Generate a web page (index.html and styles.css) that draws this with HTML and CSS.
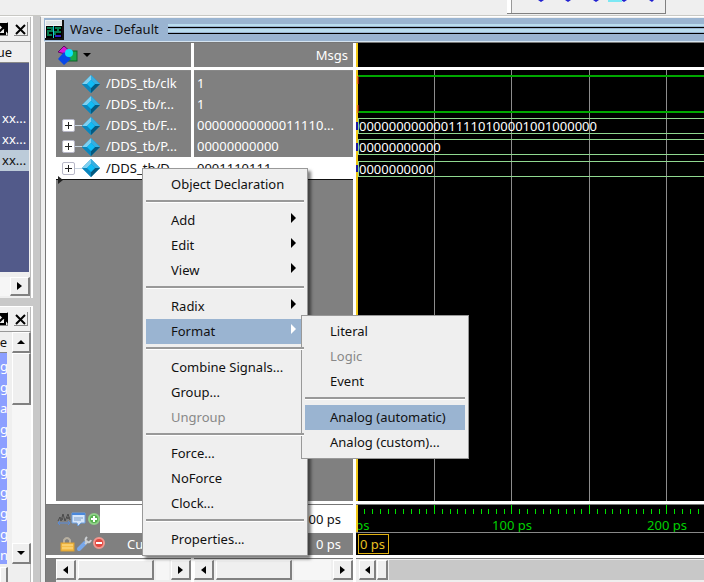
FILE: index.html
```html
<!DOCTYPE html>
<html lang="en">
<head>
    <meta charset="UTF-8">
    <meta name="viewport" content="width=device-width, initial-scale=1.0">
    <title>Wave - Default</title>
    <link rel="stylesheet" href="styles.css">
</head>
<body>
    <!-- shared icons -->
    <svg class="defs" aria-hidden="true">
        <symbol id="diamond" viewBox="0 0 18 18">
            <path d="M9 0L18 9L9 18L0 9Z" fill="#0a8cc8"/>
            <path d="M9 0L9 5L5 9L0 9Z" fill="#7fd0f0"/>
            <path d="M9 0L18 9L13 9L9 5Z" fill="#35aee0"/>
            <path d="M0 9L5 9L9 13L9 18Z" fill="#0b86bd"/>
            <path d="M18 9L9 18L9 13L13 9Z" fill="#045a80"/>
            <path d="M9 5L13 9L9 13L5 9Z" fill="#0fbcf5"/>
        </symbol>
        <symbol id="undock" viewBox="0 0 14 14">
            <path d="M1 4H6M1 3V12H11V8" fill="none" stroke="#000" stroke-width="2"/>
            <path d="M5 10L11 4M6 2H13V9Z" fill="#000" stroke="#000" stroke-width="2"/>
        </symbol>
        <symbol id="close" viewBox="0 0 14 14">
            <path d="M2 3L11 12M11 3L2 12" stroke="#000" stroke-width="2"/>
        </symbol>
    </svg>

    <div class="toolbar">
        <div class="toolbar-group">
            <svg width="158" height="13">
                <path d="M31 0h6l-3 2zM58 0h6l-3 2zM86 0h6l-3 2zM114 0h6l-3 2zM142 0h5l-2 2z" fill="#2020d0"/>
                <rect x="101" y="0" width="14" height="2" fill="#7ce8f4"/>
            </svg>
        </div>
    </div>

    <div class="workspace">
        <div class="side">
            <section class="panel objects">
                <div class="panel-bar">
                    <button class="bar-btn" aria-label="Undock"><svg><use href="#undock"/></svg></button>
                    <button class="bar-btn" aria-label="Close"><svg><use href="#close"/></svg></button>
                </div>
                <div class="col-head"><span>ue</span></div>
                <ul class="values">
                    <li></li>
                    <li></li>
                    <li>xx...</li>
                    <li>xx...</li>
                    <li class="selected">xx...</li>
                </ul>
                <div class="scroll-x">
                    <div class="track"></div>
                    <button class="scroll-btn right" aria-label="Scroll right"></button>
                </div>
            </section>

            <section class="panel processes">
                <div class="panel-bar">
                    <button class="bar-btn" aria-label="Undock"><svg><use href="#undock"/></svg></button>
                    <button class="bar-btn" aria-label="Close"><svg><use href="#close"/></svg></button>
                </div>
                <div class="panel-split">
                    <div class="types">
                        <div class="col-head"><span>pe</span></div>
                        <ul>
                            <li>g</li>
                            <li>g</li>
                            <li>a</li>
                            <li>g</li>
                            <li>g</li>
                            <li>g</li>
                            <li>g</li>
                            <li>g</li>
                            <li>g</li>
                            <li>n</li>
                        </ul>
                    </div>
                    <div class="scroll-y">
                        <button class="scroll-btn up" aria-label="Scroll up"></button>
                        <div class="thumb"></div>
                        <div class="track"></div>
                        <button class="scroll-btn down" aria-label="Scroll down"></button>
                    </div>
                </div>
                <div class="corner"><button class="scroll-btn" aria-label="Scroll right"></button></div>
            </section>
        </div>

        <main class="wave">
            <div class="title-bar">
                <svg width="19" height="20" shape-rendering="crispEdges">
                    <rect width="19" height="20" fill="#111"/>
                    <rect width="17" height="18" fill="#f4f4f4"/>
                    <rect x="1" y="1" width="16" height="4" fill="#dfe3e6"/>
                    <rect x="1" y="6" width="16" height="12" fill="#000"/>
                    <path d="M2 8H7V11H3V15H7M10 15V12H13V8H16M10 8H12M13 12H16" fill="none" stroke="#067a4c" stroke-width="2"/>
                    <rect x="8" y="6" width="1" height="12" fill="#18c8d8"/>
                    <path d="M10 16H16" stroke="#3020c0" stroke-width="2"/>
                </svg>
                <h1>Wave - Default</h1>
                <div class="grip"></div>
            </div>

            <div class="wave-grid">
                <div class="head">
                    <svg width="22" height="20">
                        <rect x="11" y="6" width="9" height="10" fill="#18a848" stroke="#106028"/>
                        <path d="M1 7L7 1L14 7L8 9Z" fill="#d818d8" stroke="#601060"/>
                        <path d="M7 7L14 14L7 20L1 14Z" fill="#0848e8"/>
                        <circle cx="12" cy="8" r="4" fill="#10e0f8"/>
                    </svg>
                    <span class="drop"></span>
                </div>
                <div class="head msgs">Msgs</div>
                <div class="head black"></div>

                <div class="gutter">
                    <ul class="signals">
                        <li><svg class="gem"><use href="#diamond"/></svg>/DDS_tb/clk</li>
                        <li><svg class="gem"><use href="#diamond"/></svg>/DDS_tb/r...</li>
                        <li><button class="expand" aria-label="Expand"></button><svg class="gem"><use href="#diamond"/></svg>/DDS_tb/F...</li>
                        <li><button class="expand" aria-label="Expand"></button><svg class="gem"><use href="#diamond"/></svg>/DDS_tb/P...</li>
                        <li class="selected"><button class="expand" aria-label="Expand"></button><svg class="gem"><use href="#diamond"/></svg>/DDS_tb/D...</li>
                    </ul>
                    <span class="insert-mark"></span>
                </div>
                <ul class="signals messages">
                    <li>1</li>
                    <li>1</li>
                    <li>00000000000011110...</li>
                    <li>00000000000</li>
                    <li class="selected">0001110111</li>
                </ul>
                <div class="plot">
                    <svg>
                        <defs>
                            <pattern id="grid" x="1" width="155" height="40" patternUnits="userSpaceOnUse">
                                <path class="crisp" d="M77 0h1V40h-1zM154 0h1V40h-1z" fill="#8c8c8c"/>
                            </pattern>
                        </defs>
                        <rect x="3" width="100%" height="100%" fill="url(#grid)"/>
                        <g class="bit">
                            <line x1="2" y1="6" x2="100%" y2="6"/>
                            <line x1="2" y1="42" x2="100%" y2="42"/>
                        </g>
                        <g class="bus">
                            <rect x="2" y="48" width="110%" height="15"/>
                            <rect x="2" y="69" width="110%" height="15"/>
                            <rect x="2" y="91" width="110%" height="15"/>
                        </g>
                        <g class="bus-text">
                            <text x="3" y="61">00000000000011110100001001000000</text>
                            <text x="3" y="82">00000000000</text>
                            <text x="3" y="104">0000000000</text>
                        </g>
                        <rect width="2" height="100%" fill="#f0c818"/>
                        <path d="M2 6V14M2 35V43" stroke="#f03020"/>
                        <path d="M1 52V60M1 73V81M1 95V102" stroke="#2018a0" stroke-width="2"/>
                    </svg>
                </div>

                <div class="foot">
                    <div class="foot-row now-row">
                        <div class="foot-tools">
                            <svg width="44" height="16">
                                <path d="M1 10L3 6L4 10L6 3L8 10M8 10L11 3L13 9" fill="none" stroke="#4a4a4a"/>
                                <path d="M3 8H6M10 7H13" stroke="#555" stroke-width="2"/>
                                <path d="M1 12H13M3 10L1 12L3 14M11 10L13 12L11 14" fill="none" stroke="#5a8cd8"/>
                                <path d="M15 2H28V12H24L21 15L20 12H15Z" fill="#d5e6fa" stroke="#6a9ee0"/>
                                <path d="M15 3H28" stroke="#4a88dc" stroke-width="2"/>
                                <path d="M17 7H26M17 9H24" stroke="#7a9cc8"/>
                                <circle cx="37" cy="8" r="5" fill="#58b050" stroke="#90d088" stroke-width="2"/>
                                <path d="M34 8H40M37 5V11" stroke="#fff" stroke-width="2"/>
                            </svg>
                        </div>
                    </div>
                    <div class="foot-row cursor-row">
                        <svg width="48" height="16">
                            <path d="M7 7V4Q10 0 13 4V7" fill="none" stroke="#b8b0a0" stroke-width="2"/>
                            <rect x="4" y="7" width="13" height="8" fill="#f4bc48" stroke="#dca030"/>
                            <path d="M5 9H16M5 12H16" stroke="#ffe090"/>
                            <path d="M22 13L28 7" stroke="#78a8ec" stroke-width="4" stroke-linecap="round"/>
                            <path d="M28 8L31 5M30 1Q27 4 30 6Q33 7 34 4" fill="none" stroke="#ccd0d4" stroke-width="2"/>
                            <circle cx="42" cy="7" r="5" fill="#e04840" stroke="#f09890" stroke-width="2"/>
                            <path d="M39 7H45" stroke="#fff" stroke-width="2"/>
                        </svg>
                        Cursor 1
                    </div>
                </div>
                <div class="foot foot-values">
                    <div class="foot-row now-row">00 ps</div>
                    <div class="foot-row cursor-row">0 ps</div>
                </div>
                <div class="foot timeline">
                    <svg class="ruler">
                        <defs>
                            <pattern id="ticks" x="1" width="155" height="30" patternUnits="userSpaceOnUse">
                                <path class="crisp" d="M7 4h1v5h-1zM15 4h1v5h-1zM23 4h1v5h-1zM31 4h1v5h-1zM38 4h1v5h-1zM46 4h1v5h-1zM54 4h1v5h-1zM62 4h1v5h-1zM69 4h1v5h-1zM77 0h1v9h-1zM85 4h1v5h-1zM93 4h1v5h-1zM100 4h1v5h-1zM108 4h1v5h-1zM116 4h1v5h-1zM124 4h1v5h-1zM131 4h1v5h-1zM139 4h1v5h-1zM147 4h1v5h-1zM154 0h1v9h-1z" fill="#00e000"/>
                            </pattern>
                        </defs>
                        <rect x="3" width="100%" height="27" fill="url(#ticks)"/>
                        <text x="1" y="25">0 ps</text>
                        <text x="156" y="25">100 ps</text>
                        <text x="311" y="25">200 ps</text>
                        <rect width="2" height="27" fill="#f0c818"/>
                    </svg>
                    <div class="cursor-line"><span class="cursor-time">0 ps</span></div>
                </div>

                <div class="scroll-x names-scroll">
                    <button class="scroll-btn left" aria-label="Scroll left"></button>
                    <div class="thumb"></div>
                    <div class="track"></div>
                    <button class="scroll-btn right" aria-label="Scroll right"></button>
                </div>
                <div class="scroll-x values-scroll">
                    <button class="scroll-btn left" aria-label="Scroll left"></button>
                    <div class="thumb"></div>
                    <div class="track"></div>
                    <button class="scroll-btn right" aria-label="Scroll right"></button>
                </div>
                <div class="scroll-x time-scroll">
                    <button class="scroll-btn left" aria-label="Scroll left"></button>
                    <div class="thumb"></div>
                    <div class="track"></div>
                </div>
            </div>
        </main>
    </div>

    <ul class="menu context">
        <li><button>Object Declaration</button></li>
        <li class="sep"></li>
        <li class="more"><button>Add</button></li>
        <li class="more"><button>Edit</button></li>
        <li class="more"><button>View</button></li>
        <li class="sep"></li>
        <li class="more"><button>Radix</button></li>
        <li class="more active">
            <button>Format</button>
            <ul class="menu submenu">
                <li><button>Literal</button></li>
                <li><button disabled>Logic</button></li>
                <li><button>Event</button></li>
                <li class="sep"></li>
                <li class="active"><button>Analog (automatic)</button></li>
                <li><button>Analog (custom)...</button></li>
            </ul>
        </li>
        <li class="sep"></li>
        <li><button>Combine Signals...</button></li>
        <li><button>Group...</button></li>
        <li><button disabled>Ungroup</button></li>
        <li class="sep"></li>
        <li><button>Force...</button></li>
        <li><button>NoForce</button></li>
        <li><button>Clock...</button></li>
        <li class="sep"></li>
        <li><button>Properties...</button></li>
    </ul>
</body>
</html>
```

FILE: styles.css
```css
* {
    box-sizing: border-box;
}
body {
    margin: 0;
    height: 100vh;
    overflow: hidden;
    display: flex;
    flex-direction: column;
    background: #c8c8c8;
    color: #111;
    font: 13px/21px "Noto Sans", Tahoma, sans-serif;
    white-space: nowrap;
}
ul {
    list-style: none;
    margin: 0;
    padding: 0;
}
button {
    font: inherit;
    color: inherit;
    padding: 0;
    border: none;
}
svg {
    display: block;
    flex-shrink: 0;
}
.crisp {
    shape-rendering: crispEdges;
}
.defs {
    display: none;
}

/* toolbar remainder */
.toolbar {
    height: 16px;
    flex-shrink: 0;
    padding-left: 507px;
    background: #efefef;
    border-bottom: 1px solid #c8c8c4;
}
.toolbar-group {
    width: 159px;
    height: 14px;
    border-right: 1px solid #808080;
    border-bottom: 1px solid #808080;
    box-shadow: inset 4px 0 #fff, inset 5px 0 #999;
}

.workspace {
    flex: 1;
    min-height: 0;
    display: flex;
}

/* left side panels */
.side {
    width: 33px;
    flex-shrink: 0;
    display: flex;
    flex-direction: column;
    gap: 8px;
}
.panel {
    background: #efefef;
    border-top: 1px solid #fff;
    border-right: 2px solid #fff;
    box-shadow: inset -1px 0 #bbb;
    overflow: hidden;
}
.objects {
    height: 282px;
}
.processes {
    flex: 1;
}
.panel-bar {
    height: 25px;
    display: flex;
    justify-content: flex-end;
    align-items: center;
    gap: 6px;
    padding-right: 3px;
    border-bottom: 1px solid #999;
}
.bar-btn {
    width: 14px;
    height: 14px;
    flex-shrink: 0;
    background: #efefef;
    border-right: 1px solid #888;
    border-bottom: 1px solid #888;
}
.bar-btn svg {
    width: 14px;
    height: 14px;
}
.col-head {
    display: flex;
    justify-content: flex-end;
    width: 29px;
    height: 21px;
    padding-right: 17px;
    border-bottom: 1px solid #888;
}
.types .col-head {
    width: 7px;
    padding-right: 0;
}
.values {
    width: 29px;
    height: 209px;
    padding-top: 2px;
    background: #525a8a;
    color: #fff;
}
.objects .values li {
    height: 21px;
    line-height: 20px;
    padding-left: 2px;
}
.objects .values .selected {
    background: #bccbd9;
    color: #111;
}
.values li:first-child {
    margin-bottom: 1px;
}

.panel-split {
    display: flex;
    gap: 5px;
}
.types {
    width: 7px;
    height: 232px;
    overflow: hidden;
}
.types ul {
    padding: 3px 0;
    background: #8c9fff;
    color: #fff;
}
.corner {
    margin-top: 3px;
}
.corner .scroll-btn {
    width: 8px;
}

/* scroll bars */
.scroll-btn {
    width: 20px;
    height: 19px;
    flex-shrink: 0;
    display: flex;
    align-items: center;
    justify-content: center;
    background: #efefef;
    border: 1px solid #fff;
    border-right: 2px solid #808080;
    border-bottom: 2px solid #808080;
}
.scroll-btn::before {
    content: "";
    border: 4px solid transparent;
}
.scroll-btn.left::before {
    border-right: 5px solid #000;
    border-left: 0;
}
.scroll-btn.right::before {
    border-left: 5px solid #000;
    border-right: 0;
}
.scroll-btn.up::before {
    border-bottom-color: #000;
    border-top: 0;
}
.scroll-btn.down::before {
    border-top-color: #000;
    border-bottom: 0;
}
.thumb {
    background: #efefef;
    border: 1px solid #fff;
    border-right: 2px solid #808080;
    border-bottom: 2px solid #808080;
}
.track {
    flex: 1;
    background: #f6f6f6;
}
.scroll-x {
    display: flex;
}
.objects .scroll-x {
    width: 30px;
    margin-top: 5px;
}
.scroll-y {
    width: 19px;
    height: 232px;
    display: flex;
    flex-direction: column;
}
.scroll-y .thumb {
    height: 52px;
}
.scroll-y .scroll-btn {
    width: 19px;
    height: 21px;
}

/* wave window */
.wave {
    flex: 1;
    min-width: 0;
    margin-left: 7px;
    padding-left: 3px;
    display: flex;
    flex-direction: column;
    background: #efefef;
    border-left: 1px solid #aaa;
    border-top: 1px solid #fff;
}
.title-bar {
    height: 24px;
    flex-shrink: 0;
    margin-top: 1px;
    padding-left: 1px;
    display: flex;
    align-items: center;
    gap: 6px;
    background: #9ab4d1;
    border-bottom: 1px solid #d5e4f0;
}
.title-bar h1 {
    margin: 0;
    font-size: 13px;
    font-weight: normal;
}
.grip {
    flex: 1;
    height: 12px;
    margin-left: 3px;
    background: linear-gradient(#b9dcee 2px, #9ab4d1 2px 3px, #000 3px 4px, #9ab4d1 4px 5px, #b9dcee 5px 8px, #9ab4d1 8px 9px, #000 9px 10px, #9ab4d1 10px);
}
.wave-grid {
    flex: 1;
    min-height: 0;
    margin-left: 1px;
    display: grid;
    grid-template-columns: 145px 159px minmax(0, 1fr);
    grid-template-rows: 24px minmax(0, 1fr) 51px 24px;
    gap: 3px;
    background: #fff;
    border-top: 1px solid #777;
    border-left: 1px solid #777;
}
.head {
    display: flex;
    align-items: center;
    gap: 4px;
    padding-left: 11px;
    background: #808080;
    color: #fff;
}
.msgs {
    justify-content: flex-end;
    padding-right: 5px;
}
.head.black {
    background: #000;
    border-left: 2px solid #f0c818;
}
.drop {
    border: 4px solid transparent;
    border-top-color: #000;
    border-bottom: 0;
}
.gutter {
    position: relative;
    padding-left: 10px;
    display: grid;
}
.signals {
    padding-top: 2px;
    background: #808080;
    color: #fff;
    border-top: 1px solid #888;
}
.signals li {
    height: 21px;
    display: flex;
    align-items: center;
}
.gutter .signals li {
    display: grid;
    grid-template-columns: 14px 18px 1fr;
    column-gap: 6px;
    padding-left: 6px;
}
.gem {
    width: 18px;
    height: 18px;
    grid-column: 2;
}
.expand {
    width: 13px;
    height: 13px;
    position: relative;
    background: linear-gradient(#222, #222) center / 7px 1px no-repeat, linear-gradient(#222, #222) center / 1px 7px no-repeat, #fff;
    border: 1px solid #b8b8c8;
    border-radius: 2px;
}
.expand::after {
    content: "";
    position: absolute;
    left: 12px;
    top: 5px;
    width: 7px;
    height: 1px;
    background: #c8d4e0;
}
.signals .selected {
    height: 23px;
    background: #fff;
    color: #111;
    border-bottom: 1px solid #111;
}
.insert-mark {
    position: absolute;
    left: 12px;
    top: 106px;
    border: 4px solid transparent;
    border-left: 5px solid #222;
    border-right: 0;
}
.signals.messages li {
    padding-left: 3px;
}
.plot {
    background: #000;
    overflow: hidden;
}
.plot svg {
    width: 100%;
    height: 100%;
}
.bit line {
    stroke: #00a800;
    stroke-width: 2;
}
.bus rect {
    fill: none;
    stroke: #90d890;
    stroke-width: 1;
    shape-rendering: crispEdges;
}
.bus-text {
    fill: #fff;
}

/* time and cursor rows */
.foot {
    overflow: hidden;
    border-top: 1px solid #777;
    background: #808080;
}
.foot-row {
    display: flex;
    align-items: center;
}
.now-row {
    height: 28px;
    background: #fff;
}
.foot-tools {
    width: 54px;
    height: 28px;
    padding: 6px 0 0 11px;
    background: #808080;
}
.cursor-row {
    height: 22px;
    padding-left: 11px;
    gap: 22px;
    color: #fff;
}
.foot-values .foot-row {
    justify-content: flex-end;
    padding-right: 12px;
}
.timeline {
    background: #000;
}
.ruler {
    width: 100%;
    height: 28px;
    border-bottom: 1px solid #888;
}
.ruler text {
    fill: #00d000;
    text-anchor: middle;
}
.cursor-line {
    height: 22px;
    padding: 1px 2px;
}
.cursor-time {
    display: inline-block;
    height: 20px;
    line-height: 19px;
    padding: 0 3px 0 1px;
    border: 1px solid #e0b010;
    color: #e8c020;
}

/* bottom scroll bars */
.wave-grid .scroll-x {
    padding: 1px 0 2px;
    border-top: 1px solid #777;
    background: #efefef;
    gap: 2px;
}
.wave-grid .scroll-x .scroll-btn,
.wave-grid .thumb {
    height: 20px;
}
.wave-grid .names-scroll {
    padding-left: 10px;
    background: linear-gradient(to right, #808080 10px, #efefef 10px);
}
.names-scroll .thumb,
.values-scroll .thumb {
    width: 76px;
}
.wave-grid .time-scroll {
    padding-left: 3px;
    gap: 1px;
}
.time-scroll .scroll-btn {
    width: 17px;
}
.time-scroll .thumb {
    width: 11px;
}
.time-scroll .track {
    background: #c8c8c8;
}

/* menus */
.menu {
    position: absolute;
    padding: 3px;
    background: #efefef;
    border: 1px solid #999;
    color: #111;
}
.context {
    left: 142px;
    top: 168px;
    width: 166px;
    box-shadow: 3px 3px 3px rgba(0, 0, 0, 0.5);
}
.submenu {
    left: 155px;
    top: -4px;
    width: 168px;
}
.menu li {
    position: relative;
    height: 25px;
}
.menu button {
    display: block;
    width: 100%;
    height: 25px;
    padding-left: 25px;
    background: none;
    text-align: left;
}
.menu button:disabled {
    color: #888;
}
.menu .active > button {
    background: #9ab4d1;
}
.more::after {
    content: "";
    position: absolute;
    right: 8px;
    top: 5px;
    border: 5px solid transparent;
    border-left-color: #000;
    border-right: 0;
}
.more.active::after {
    border-left-color: #fff;
}
.menu .sep {
    height: 11px;
    padding-top: 3px;
}
.sep::before {
    content: "";
    display: block;
    height: 2px;
    background: #999;
    border-bottom: 1px solid #fff;
}
```
